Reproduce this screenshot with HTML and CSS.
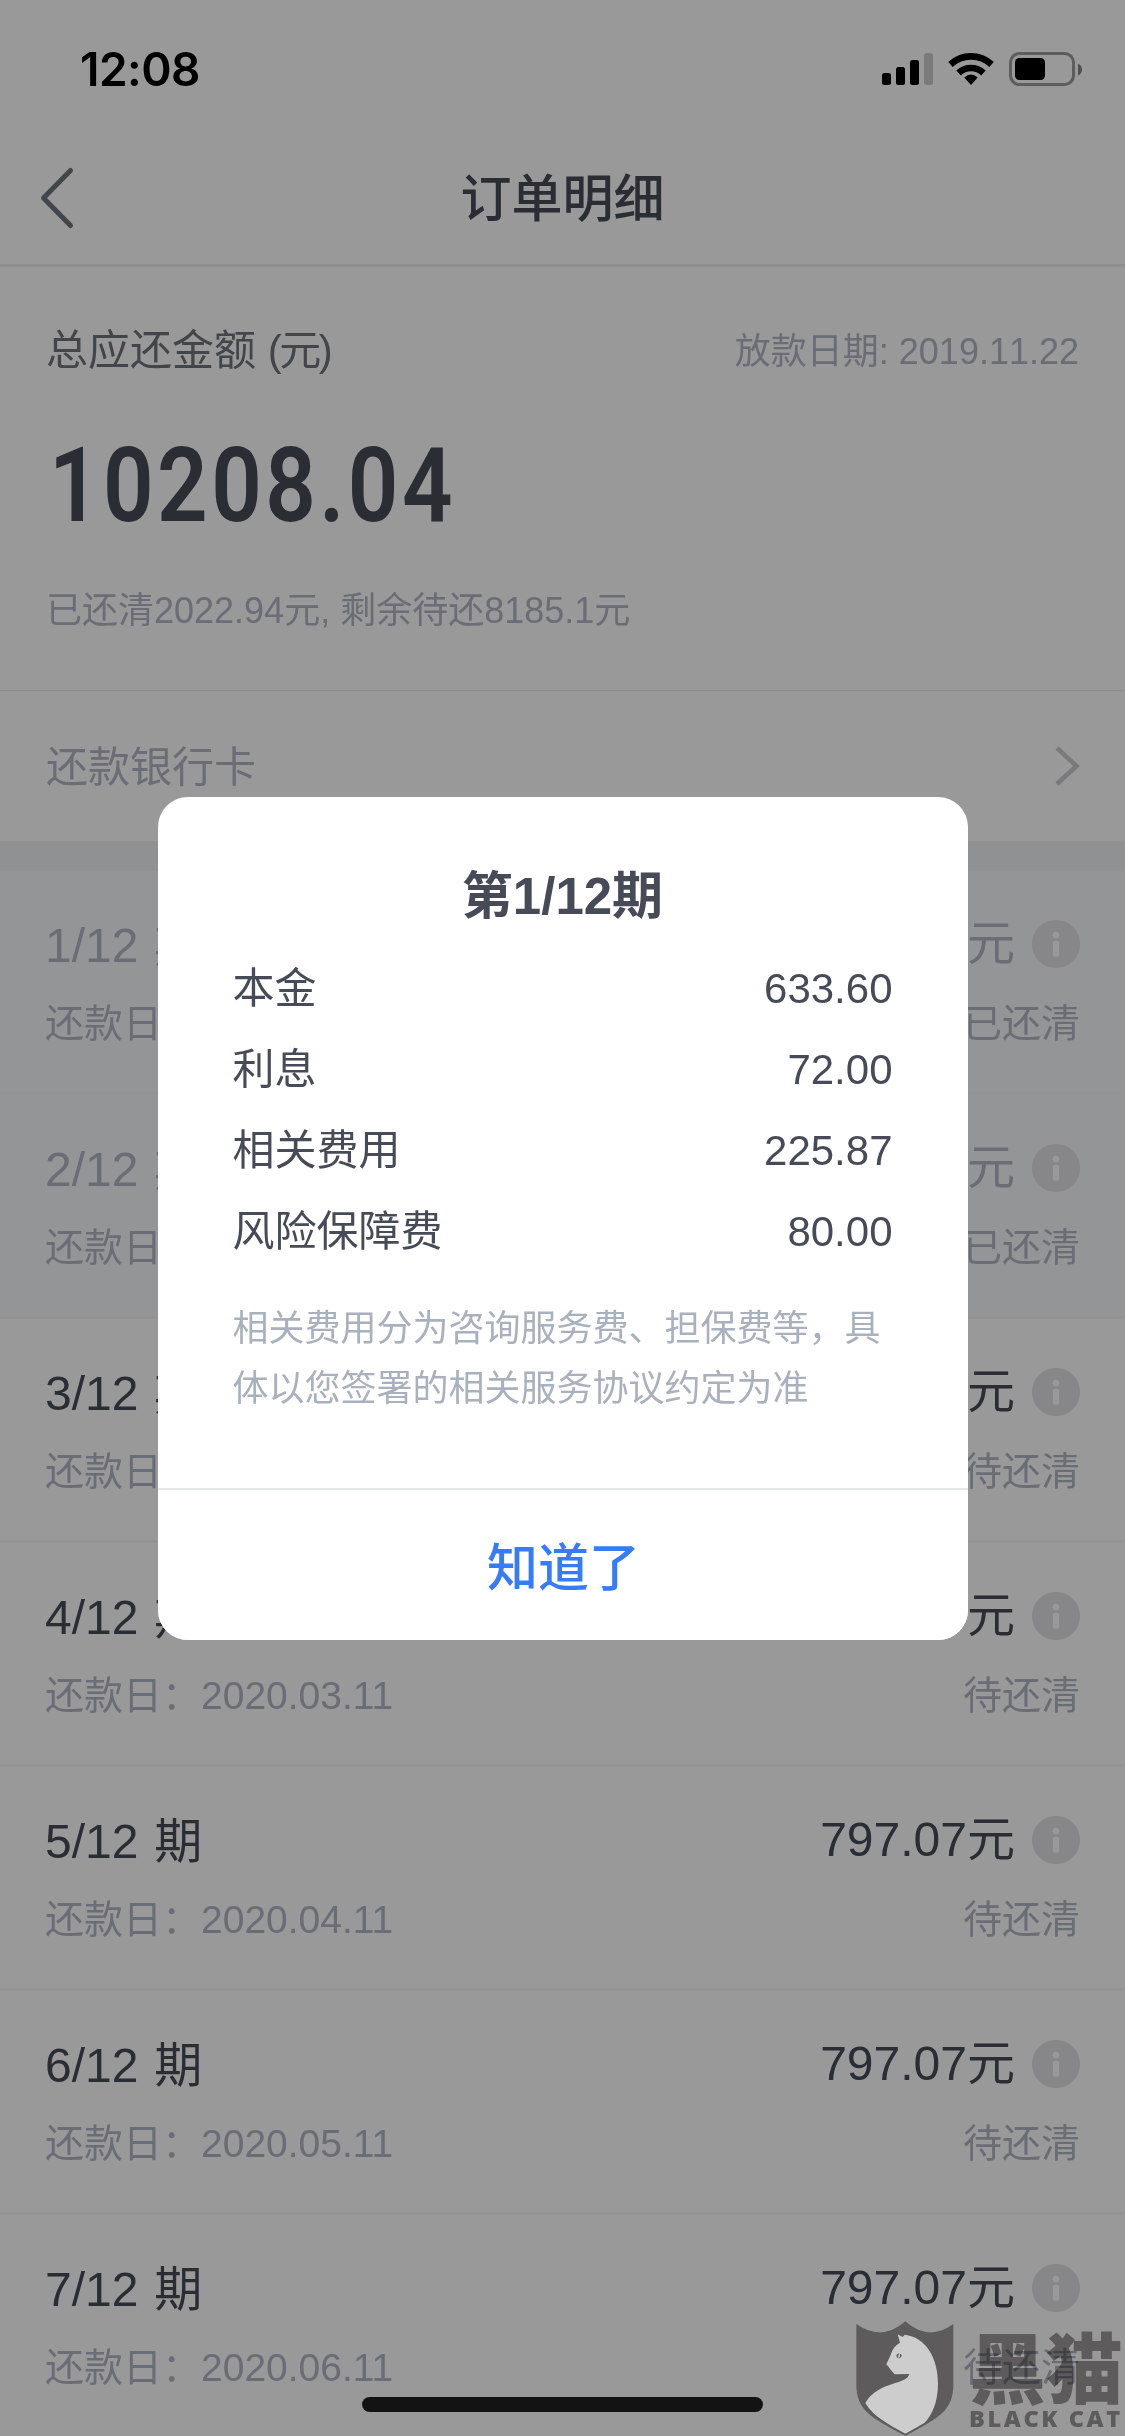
FILE: index.html
```html
<!DOCTYPE html>
<html lang="zh-CN">
<head>
<meta charset="utf-8">
<title>订单明细</title>
<link rel="stylesheet" href="styles.css">
</head>
<body>
<svg class="defs" width="0" height="0">
  <symbol id="info" viewBox="0 0 48 48">
    <circle cx="24" cy="24" r="24" fill="#e1e1e5"/>
    <circle cx="24" cy="15" r="3.2" fill="#fff"/>
    <rect x="21" y="21" width="6" height="15.5" rx="1.6" fill="#fff"/>
  </symbol>
</svg>
<div class="screen">
  <div class="page">
    <div class="status">
      <span class="time">12:08</span>
      <svg class="status-icons" width="202" height="36" viewBox="0 0 202 36">
        <rect x="0" y="22" width="9" height="12" rx="2.5"/>
        <rect x="14" y="16" width="9" height="18" rx="2.5"/>
        <rect x="28" y="9" width="9" height="25" rx="2.5"/>
        <rect x="42" y="2" width="9" height="32" rx="2.5" fill="#cbcbcb"/>
        <g fill="none" stroke="#000" stroke-width="6.6">
          <path d="M68.5 13.5A30 30 0 0 1 109.5 13.5"/>
          <path d="M76.6 22A18 18 0 0 1 101.4 22"/>
        </g>
        <path d="M82.300 26.500Q89 20.600 95.700 26.500L89 34Z"/>
        <rect x="128.500" y="2.500" width="63" height="31" rx="9" fill="none" stroke="#9b9b9b" stroke-width="3"/>
        <rect x="133" y="7" width="30" height="22" rx="4.500"/>
        <path d="M196 12.500V24.500Q200 22.500 200 18.500T196 12.500Z" fill="#868686"/>
      </svg>
    </div>
    <header class="nav">
      <svg class="back" width="36" height="64" viewBox="0 0 36 64"><path d="M31.500 4.500 4.500 32 31.500 59.500" fill="none" stroke="#6e757d" stroke-width="5" stroke-linecap="round" stroke-linejoin="round"/></svg>
      <h1>订单明细</h1>
    </header>
    <section class="summary">
      <div class="line">
        <span class="label">总应还金额 <span class="unit">(元)</span></span>
        <span class="muted">放款日期: 2019.11.22</span>
      </div>
      <div class="total"><span>10208.04</span></div>
      <div class="muted">已还清2022.94元, 剩余待还8185.1元</div>
    </section>
    <section class="bank">
      <span>还款银行卡</span>
      <svg width="27" height="42" viewBox="0 0 27 42"><path d="M3 3 22.500 21 3 39" fill="none" stroke="#cbcbd0" stroke-width="4.500"/></svg>
    </section>
    <ul class="plan">
      <li class="paid"><div class="line main"><span>1/12 期</span><span class="sum">1011.47元<svg class="info"><use href="#info"/></svg></span></div><div class="line sub"><span>还款日：2019.12.11</span><span>已还清</span></div></li>
      <li class="paid"><div class="line main"><span>2/12 期</span><span class="sum">1011.47元<svg class="info"><use href="#info"/></svg></span></div><div class="line sub"><span>还款日：2020.01.11</span><span>已还清</span></div></li>
      <li><div class="line main"><span>3/12 期</span><span class="sum">797.07元<svg class="info"><use href="#info"/></svg></span></div><div class="line sub"><span>还款日：2020.02.11</span><span>待还清</span></div></li>
      <li><div class="line main"><span>4/12 期</span><span class="sum">797.07元<svg class="info"><use href="#info"/></svg></span></div><div class="line sub"><span>还款日：2020.03.11</span><span>待还清</span></div></li>
      <li><div class="line main"><span>5/12 期</span><span class="sum">797.07元<svg class="info"><use href="#info"/></svg></span></div><div class="line sub"><span>还款日：2020.04.11</span><span>待还清</span></div></li>
      <li><div class="line main"><span>6/12 期</span><span class="sum">797.07元<svg class="info"><use href="#info"/></svg></span></div><div class="line sub"><span>还款日：2020.05.11</span><span>待还清</span></div></li>
      <li><div class="line main"><span>7/12 期</span><span class="sum">797.07元<svg class="info"><use href="#info"/></svg></span></div><div class="line sub"><span>还款日：2020.06.11</span><span>待还清</span></div></li>
    </ul>
  </div>

  <div class="overlay">
    <div class="dialog">
      <div class="dialog-body">
        <h2>第1/12期</h2>
        <dl>
          <div class="line"><dt>本金</dt><dd>633.60</dd></div>
          <div class="line"><dt>利息</dt><dd>72.00</dd></div>
          <div class="line"><dt>相关费用</dt><dd>225.87</dd></div>
          <div class="line"><dt>风险保障费</dt><dd>80.00</dd></div>
        </dl>
        <p>相关费用分为咨询服务费、担保费等，具体以您签署的相关服务协议约定为准</p>
      </div>
      <button class="confirm">知道了</button>
    </div>
  </div>

  <div class="home-bar"></div>

  <div class="watermark">
    <svg width="98" height="115" viewBox="92 302 294 345">
      <path d="M93 311Q170 365 240 303Q310 365 384 311V490C384 570 345 590 240 646C135 590 93 570 93 490Z" fill="#5d5b5c"/>
      <path d="M217 342 232 350 238 343C300 350 338 410 338 490C338 545 320 585 297 608L240 640C190 612 145 590 120 548C150 495 215 492 240 476Q250 470 252 461L208 462Q196 450 190 440L183 432Q193 412 198 398Q204 378 224 367Z" fill="#cdcdcd"/>
      <path d="M213 405Q215 400 221 399L219 405Q217 410 220 415Q213 412 213 405ZM223 400Q229 400 229 406Q228 412 221 414L224 408Z" fill="#5d5b5c"/>
    </svg>
    <div class="brand">
      <span class="brand-cn">黑猫</span>
      <span class="brand-en">BLACK CAT</span>
    </div>
  </div>
</div>
</body>
</html>
```
FILE: styles.css
```css
* { box-sizing: border-box; margin: 0; padding: 0; }
body {
  font-family: "Liberation Sans", "Noto Sans CJK SC", sans-serif;
  font-kerning: none;
  color: #464b57;
  background: #fff;
}
.defs { position: absolute; }
.screen { position: relative; width: 1125px; height: 2436px; overflow: hidden; }
.page { background: #fff; }
.line { display: flex; justify-content: space-between; align-items: center; }

.status {
  display: flex;
  justify-content: space-between;
  height: 132px;
  padding: 51px 41px 0 80px;
}
.time { font: 600 46px/36px Inter, sans-serif; color: #000; letter-spacing: -0.5px; }

.nav {
  display: grid;
  grid-template-columns: 36px 1fr 36px;
  align-items: center;
  height: 135px;
  padding: 0 39px;
  border-bottom: 3px solid #eee;
}
.nav h1 { padding-top: 3px; font-size: 51px; font-weight: 500; line-height: 60px; text-align: center; }

.summary { height: 424px; padding: 55px 46px 0; border-bottom: 1px solid #e3e5e8; }
.summary .line { height: 60px; }
.label { font-size: 42px; line-height: 50px; padding-bottom: 2px; color: #6e757d; }
.unit { letter-spacing: -2.5px; }
.muted { font-size: 36px; color: #b1b6c3; line-height: 54px; }
.total { height: 134px; margin: 37px 0 31px; line-height: 134px; }
.total span {
  display: inline-block;
  margin-left: 3px;
  font-family: Roboto, sans-serif;
  font-size: 103px;
  font-weight: 600;
  letter-spacing: 4px;
  transform: scaleX(0.86);
  transform-origin: left;
}

.bank {
  display: flex;
  justify-content: space-between;
  align-items: center;
  height: 180px;
  padding: 0 44px 0 46px;
  border-bottom: 30px solid #f0f2f5;
  color: #b1b6c3;
  font-size: 42px;
}
.bank span { padding-bottom: 5px; }

.plan { list-style: none; }
.plan li { height: 224px; padding: 43px 45px 0; border-bottom: 3px solid #f4f5f7; }
.plan .paid { background: #f7f8fa; color: #b1b6c3; }
.main { height: 60px; font-size: 48px; line-height: 60px; }
.main > span:first-child { padding-top: 3px; word-spacing: 2.5px; }
.sum { display: flex; align-items: center; line-height: 66px; }
.info { width: 48px; height: 48px; margin-left: 17px; }
.sub { height: 54px; margin-top: 23px; font-size: 39px; line-height: 54px; color: #b1b6c3; font-kerning: normal; }

.overlay {
  position: absolute;
  inset: 0;
  display: flex;
  align-items: center;
  justify-content: center;
  background: rgba(0, 0, 0, 0.4);
}
.dialog { width: 810px; height: 843px; border-radius: 30px; background: #fff; overflow: hidden; }
.dialog-body { height: 691px; padding: 67px 75px 0; }
.dialog h2 { font-size: 51px; font-weight: 600; line-height: 66px; text-align: center; }
.dialog dl { padding-top: 17px; }
.dialog dl .line { height: 81px; font-size: 42px; line-height: 60px; }
.dialog dt { padding-top: 3px; }
.dialog dd { padding-top: 3px; }
.dialog p { padding-top: 28px; font-size: 36px; line-height: 60px; color: #a9b0be; }
.confirm {
  display: block;
  width: 100%;
  height: 152px;
  padding: 0 0 2px 2px;
  border: 0;
  border-top: 2px solid #e5e8eb;
  background: #fff;
  color: #367bf7;
  font: 500 51px "Noto Sans CJK SC", sans-serif;
}

.home-bar {
  position: absolute;
  left: 362px;
  bottom: 24px;
  width: 401px;
  height: 15px;
  border-radius: 8px;
  background: #131313;
}

.watermark {
  position: absolute;
  left: 856px;
  bottom: 0;
  display: flex;
  gap: 15px;
}
.brand {
  display: flex;
  flex-direction: column;
  width: 154px;
  padding-top: 5px;
  color: #9b9899;
  mix-blend-mode: multiply;
}
.brand-cn { font: 900 77px/78px "Noto Sans CJK SC", sans-serif; white-space: nowrap; }
.brand-en { font: 800 23.5px/28px "Open Sans", sans-serif; letter-spacing: 2.6px; white-space: nowrap; }
```
